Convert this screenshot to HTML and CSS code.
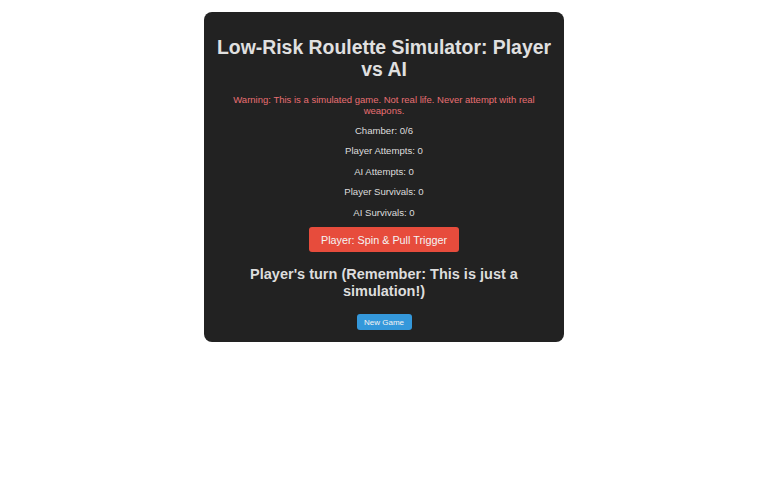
FILE: index.html
```html
<!DOCTYPE html>
<html>
<head>
    <meta charset="utf-8">
    <title>Low-Risk Roulette Simulator</title>
    <link rel="stylesheet" href="styles.css">
</head>
<body>
    <div class="game">
        <h1>Low-Risk Roulette Simulator: Player vs AI</h1>
        <p class="warn">Warning: This is a simulated game. Not real life. Never attempt with real weapons.</p>
        <div class="stats">
            <p>Chamber: 0/6</p>
            <p>Player Attempts: 0</p>
            <p>AI Attempts: 0</p>
            <p>Player Survivals: 0</p>
            <p>AI Survivals: 0</p>
        </div>
        <button type="button" class="pull">Player: Spin &amp; Pull Trigger</button>
        <h2>Player's turn (Remember: This is just a simulation!)</h2>
        <button type="button" class="reset">New Game</button>
    </div>
</body>
</html>
```

FILE: styles.css
```css
html, body { margin: 0; padding: 0; background: #fff; }
body { font-family: "Liberation Sans", Arial, sans-serif; }
.game { width: 360px; box-sizing: border-box; margin: 12px auto 0; padding: 24px 12px 12px; background: #222; border-radius: 8px; color: #ddd; text-align: center; display: flex; flex-direction: column; align-items: center; }
h1 { font-size: 19.4px; line-height: 22px; margin: 0; color: #e0e0e0; }
.warn { font-size: 9.5px; line-height: 11px; margin: 13.5px 0 0; color: #e86f72; }
.stats { margin-top: 9px; display: flex; flex-direction: column; gap: 9.5px; }
.stats p { font-size: 9.6px; line-height: 11px; margin: 0; }
.pull { margin-top: 9.5px; width: 150px; height: 25px; border: 0; border-radius: 3px; background: #e74c3c; color: #f4f4f4; font: 10.8px "Liberation Sans", Arial, sans-serif; }
h2 { font-size: 14.5px; line-height: 17px; margin: 13.5px 0 0; color: #ddd; }
.reset { margin-top: 14.5px; width: 55px; height: 16px; padding: 0; border: 0; border-radius: 3px; background: #3498db; color: #f4f4f4; font: 8px "Liberation Sans", Arial, sans-serif; }
```
